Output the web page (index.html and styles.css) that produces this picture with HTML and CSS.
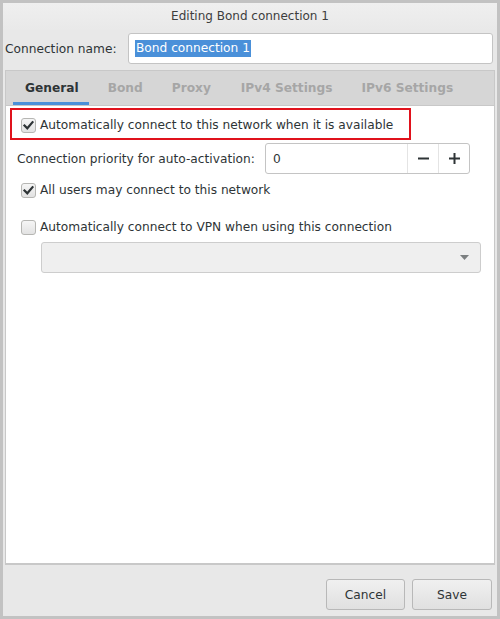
FILE: index.html
```html
<!DOCTYPE html>
<html>
<head>
<meta charset="utf-8">
<link rel="stylesheet" href="styles.css">
</head>
<body>
<div class="window">
  <div class="titlebar">Editing Bond connection 1</div>
  <div class="name-row">
    <span class="name-label">Connection name:</span>
    <div class="entry"><span class="sel">Bond connection 1</span></div>
  </div>
  <div class="notebook">
    <div class="tabs">
      <div class="tab active">General</div>
      <div class="tab">Bond</div>
      <div class="tab">Proxy</div>
      <div class="tab">IPv4 Settings</div>
      <div class="tab">IPv6 Settings</div>
    </div>
    <div class="page">
      <div class="check-row highlight">
        <span class="check on"><svg width="15" height="15" viewBox="0 0 15 15"><path d="M3.5 7.5 L6.3 10.3 L11.5 4.2" fill="none" stroke="#2e3436" stroke-width="2.2" stroke-linecap="square"/></svg></span>
        <span>Automatically connect to this network when it is available</span>
      </div>
      <div class="priority-row">
        <span class="priority-label">Connection priority for auto-activation:</span>
        <div class="spin">
          <div class="spin-value">0</div>
          <div class="spin-btn"><svg width="11" height="11" viewBox="0 0 11 11"><rect x="0" y="4.5" width="11" height="2" fill="#2e3436"/></svg></div>
          <div class="spin-btn"><svg width="11" height="11" viewBox="0 0 11 11"><rect x="0" y="4.5" width="11" height="2" fill="#2e3436"/><rect x="4.5" y="0" width="2" height="11" fill="#2e3436"/></svg></div>
        </div>
      </div>
      <div class="check-row plain users">
        <span class="check on"><svg width="15" height="15" viewBox="0 0 15 15"><path d="M3.5 7.5 L6.3 10.3 L11.5 4.2" fill="none" stroke="#2e3436" stroke-width="2.2" stroke-linecap="square"/></svg></span>
        <span>All users may connect to this network</span>
      </div>
      <div class="check-row plain vpn">
        <span class="check"></span>
        <span>Automatically connect to VPN when using this connection</span>
      </div>
      <div class="combo">
        <svg width="9" height="5" viewBox="0 0 9 5"><path d="M0 0 L9 0 L4.5 5 Z" fill="#7b7f80"/></svg>
      </div>
    </div>
  </div>
  <div class="actions">
    <button class="btn cancel">Cancel</button>
    <button class="btn save">Save</button>
  </div>
</div>
</body>
</html>
```

FILE: styles.css
```css
* { box-sizing: border-box; }
html, body { margin: 0; padding: 0; }
body {
  font-family: "DejaVu Sans", "Liberation Sans", sans-serif;
  font-size: 12.2px;
  color: #2e3436;
  background: #c2c2c2;
}
.window {
  width: 500px;
  height: 619px;
  border: 3px solid #c2c2c2;
  background: #e8e8e8;
  display: flex;
  flex-direction: column;
}
.titlebar {
  height: 27px;
  flex: none;
  display: flex;
  align-items: center;
  justify-content: center;
  font-size: 12px;
  color: #3d3d3d;
  background: linear-gradient(#efefef, #e9e9e9);
  padding-bottom: 2px;
}
.name-row {
  flex: none;
  display: flex;
  align-items: center;
  padding: 3px 4px 0 2px;
}
.name-label {
  width: 123px;
  flex: none;
}
.entry {
  flex: 1;
  height: 31px;
  background: #fff;
  border: 1px solid #c4c4c4;
  border-radius: 3px;
  display: flex;
  align-items: center;
  padding-left: 6px;
}
.sel {
  background: #4a90d9;
  color: #fff;
  line-height: 17px;
  padding: 0 1px;
}
.notebook {
  flex: 1;
  margin: 6px 2px 0 2px;
  border: 1px solid #c8c8c8;
  border-bottom-width: 2px;
  display: flex;
  flex-direction: column;
  background: #fff;
}
.tabs {
  flex: none;
  height: 35px;
  background: #d6d6d6;
  border-bottom: 1px solid #c8c8c8;
  display: flex;
  padding-left: 7px;
  gap: 7px;
}
.tab {
  font-weight: bold;
  color: #a6a6a6;
  padding: 3px 12px 0 12px;
  display: flex;
  align-items: center;
  border-bottom: 3px solid transparent;
}
.tab.active {
  color: #2e3436;
  border-bottom-color: #4a90d9;
  padding-right: 10px;
}
.tab:nth-child(2) { padding: 3px 9px 0 12px; }
.tab:nth-child(3) { padding: 3px 12px 0 13px; }
.tab:nth-child(4) { padding: 3px 12px 0 11px; }
.tab:nth-child(5) { padding: 3px 12px 0 10px; }
.page {
  flex: 1;
  background: #fff;
  padding-top: 2px;
}
.check-row {
  display: flex;
  align-items: center;
}
.check {
  width: 15px;
  height: 15px;
  flex: none;
  border: 1px solid #b6b6b3;
  border-radius: 3px;
  background: linear-gradient(#f6f6f6, #e2e2e2);
  margin-right: 4px;
  display: flex;
  align-items: center;
  justify-content: center;
}
.check svg { display: block; margin: -1px; }
.highlight {
  margin-left: 4px;
  width: 401px;
  height: 32px;
  border: 2px solid #e0121c;
  padding-left: 9px;
  padding-top: 2px;
}
.priority-row {
  display: flex;
  align-items: center;
  margin-top: 3px;
  padding-left: 11px;
}
.priority-label {
  width: 248px;
  flex: none;
}
.spin {
  width: 205px;
  height: 31px;
  display: flex;
  border: 1px solid #c4c4c4;
  border-radius: 3px;
  background: #fff;
}
.spin-value {
  flex: 1;
  display: flex;
  align-items: center;
  padding-left: 7px;
}
.spin-btn {
  width: 31px;
  display: flex;
  align-items: center;
  justify-content: center;
  border-left: 1px solid #e4e4e4;
}
.spin-btn svg { display: block; }
.plain {
  padding-left: 15px;
  height: 16px;
}
.users { margin-top: 8px; }
.vpn { margin-top: 21px; }
.combo {
  margin: 7px 0 0 35px;
  width: 440px;
  height: 31px;
  border: 1px solid #cdcdcd;
  border-radius: 3px;
  background: #efefef;
  display: flex;
  align-items: center;
  justify-content: flex-end;
  padding-right: 11px;
}
.combo svg { display: block; }
.actions {
  flex: none;
  height: 51px;
  display: flex;
  justify-content: flex-end;
  align-items: flex-start;
  gap: 7px;
  padding: 14px 5px 0 0;
}
.btn {
  font-family: "DejaVu Sans", "Liberation Sans", sans-serif;
  font-size: 12.2px;
  color: #2e3436;
  height: 31px;
  border: 1px solid #b8b8b8;
  border-radius: 3px;
  background: linear-gradient(#f0f0f0, #e0e0e0);
  padding: 0;
}
.cancel { width: 79px; }
.save { width: 80px; }
```
